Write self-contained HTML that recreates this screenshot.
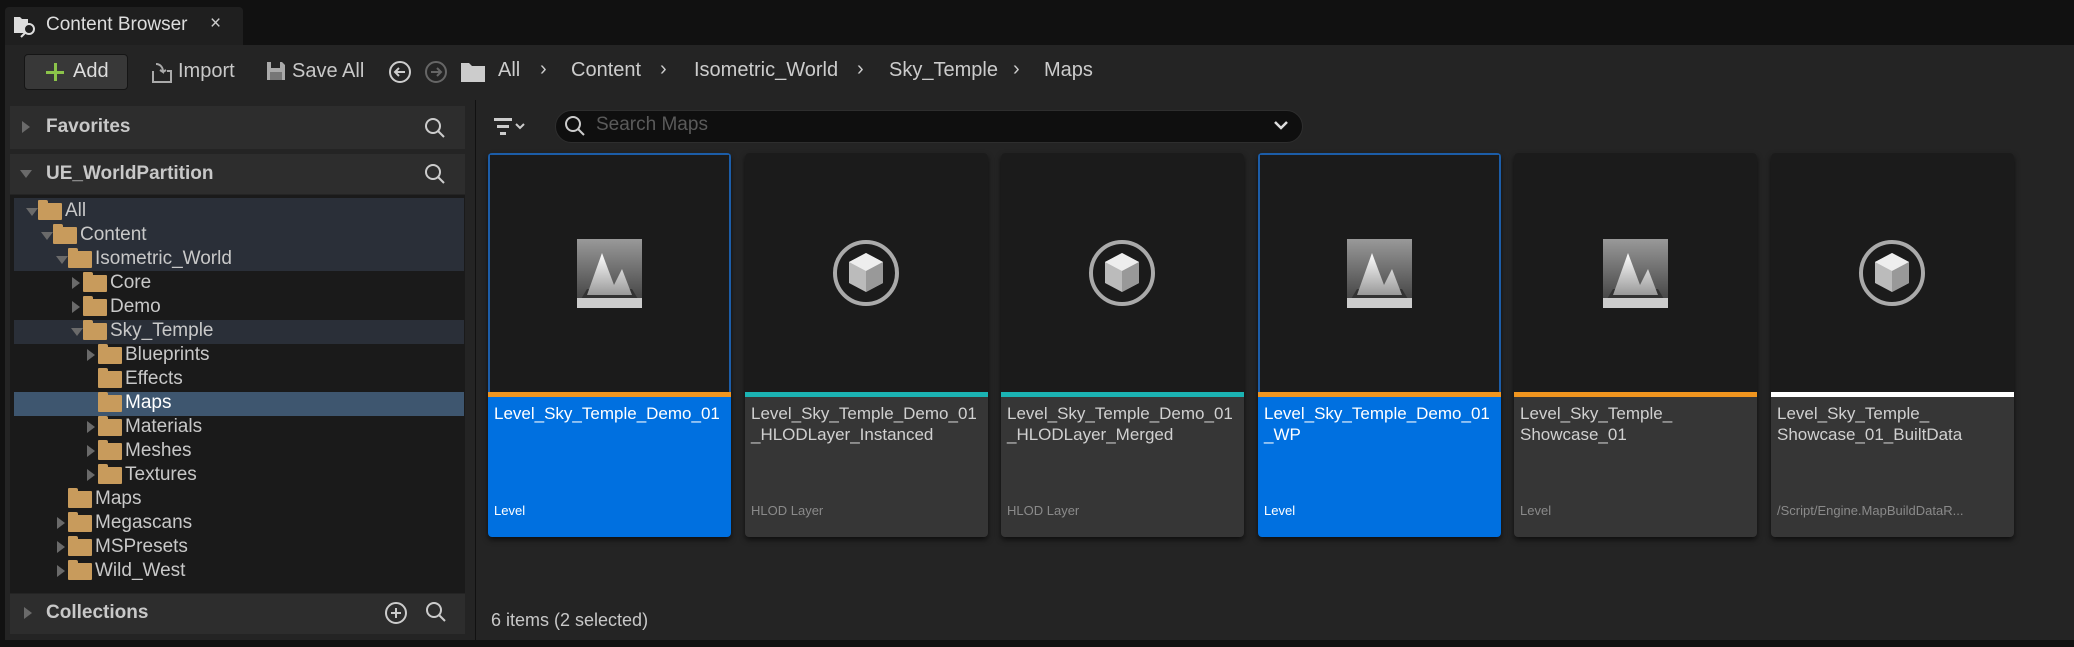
<!DOCTYPE html>
<html><head><meta charset="utf-8"><style>
*{margin:0;padding:0;box-sizing:border-box}
body{width:2074px;height:647px;background:#111;font-family:"Liberation Sans",sans-serif;color:#c0c0c0;position:relative;overflow:hidden}
.a{position:absolute}
.t{white-space:nowrap}
.row{position:absolute;left:14px;width:448px;height:24px;font-size:19px;color:#c8c8c8;line-height:24px}
.fold{position:absolute;top:4px;width:24px;height:17px;background:#c89b5c;border-radius:1px}
.fold:before{content:"";position:absolute;left:0;top:-3px;width:10px;height:4px;background:#c89b5c;border-radius:1px 2px 0 0}
.arr{position:absolute;top:6px;width:0;height:0}
.ar{border-top:6px solid transparent;border-bottom:6px solid transparent;border-left:8px solid #6a6a6a}
.ad{top:9px;border-left:6px solid transparent;border-right:6px solid transparent;border-top:8px solid #6a6a6a}
.tile{position:absolute;top:153px;width:243px;height:384px;border-radius:4px;overflow:hidden;background:#363636;box-shadow:0 3px 6px rgba(0,0,0,.6)}
.thumb{position:absolute;left:0;top:0;width:100%;height:239px;background:#1b1b1b}
.bar{position:absolute;left:0;top:239px;width:100%;height:5px}
.nm{position:absolute;left:6px;top:250px;font-size:17px;line-height:21px;color:#d0d0d0;white-space:nowrap}
.ty{position:absolute;left:6px;top:350px;font-size:13px;color:#8a8a8a;white-space:nowrap}
.sel{background:#0070e0}
.sel .nm,.sel .ty{color:#fff}
.sel .thumb{border:2px solid #1c5da8;border-bottom:none}
</style></head><body>
<!-- tab -->
<div class="a" style="left:5px;top:7px;width:238px;height:38px;background:#1f1f1f;border-radius:4px 4px 0 0"></div>
<svg class="a" style="left:12px;top:14px" width="26" height="24" viewBox="0 0 26 24"><path d="M2 3h6l2 2h6v14H2z" fill="#ddd"/><circle cx="17" cy="15" r="5" fill="#1f1f1f" stroke="#ddd" stroke-width="2"/><path d="M13 19l-4 4" stroke="#ddd" stroke-width="2"/></svg>
<div class="a t" style="left:46px;top:14px;font-size:19px;color:#ddd">Content Browser</div>
<div class="a t" style="left:210px;top:13px;font-size:19px;color:#ccc">×</div>
<!-- toolbar -->
<div class="a" style="left:5px;top:45px;width:2069px;height:55px;background:#242424"></div>
<div class="a" style="left:24px;top:54px;width:104px;height:36px;background:#383838;border:1px solid #151515;border-radius:4px"></div>
<div class="a" style="left:46px;top:71px;width:18px;height:3px;background:#8bc34a"></div>
<div class="a" style="left:54px;top:63px;width:3px;height:18px;background:#8bc34a"></div>
<div class="a t" style="left:73px;top:60px;font-size:20px;color:#ddd">Add</div>
<svg class="a" style="left:150px;top:60px" width="24" height="24" viewBox="0 0 24 24" fill="none" stroke="#aaa" stroke-width="2"><path d="M3 11v11h18V11h-4"/><path d="M6 4c4 0 7 3 7 8l-3-2m3 2l3-2"/></svg>
<div class="a t" style="left:178px;top:60px;font-size:20px;color:#c8c8c8">Import</div>
<svg class="a" style="left:265px;top:60px" width="22" height="22" viewBox="0 0 22 22"><path d="M2 2h15l3 3v15H2z" fill="#aaa"/><rect x="6" y="2" width="9" height="6" fill="#242424"/><rect x="5" y="12" width="12" height="8" fill="#777"/></svg>
<div class="a t" style="left:292px;top:60px;font-size:20px;color:#c8c8c8">Save All</div>
<svg class="a" style="left:388px;top:60px" width="24" height="24" viewBox="0 0 24 24" fill="none" stroke="#ccc" stroke-width="2"><circle cx="12" cy="12" r="10"/><path d="M17 12H7m4-4l-4 4 4 4"/></svg>
<svg class="a" style="left:424px;top:60px" width="24" height="24" viewBox="0 0 24 24" fill="none" stroke="#666" stroke-width="2"><circle cx="12" cy="12" r="10"/><path d="M7 12h10m-4-4l4 4-4 4"/></svg>
<svg class="a" style="left:460px;top:61px" width="26" height="22" viewBox="0 0 26 22"><path d="M1 2h8l3 3h13v16H1z" fill="#ccc"/></svg>
<div class="a t" style="left:498px;top:59px;font-size:20px;color:#ccc">All</div>
<div class="a t" style="left:540px;top:58px;font-size:20px;color:#ccc">›</div>
<div class="a t" style="left:571px;top:59px;font-size:20px;color:#ccc">Content</div>
<div class="a t" style="left:660px;top:58px;font-size:20px;color:#ccc">›</div>
<div class="a t" style="left:694px;top:59px;font-size:20px;color:#ccc">Isometric_World</div>
<div class="a t" style="left:857px;top:58px;font-size:20px;color:#ccc">›</div>
<div class="a t" style="left:889px;top:59px;font-size:20px;color:#ccc">Sky_Temple</div>
<div class="a t" style="left:1013px;top:58px;font-size:20px;color:#ccc">›</div>
<div class="a t" style="left:1044px;top:59px;font-size:20px;color:#ccc">Maps</div>
<!-- left panel -->
<div class="a" style="left:5px;top:100px;width:470px;height:540px;background:#242424"></div>
<div class="a" style="left:10px;top:106px;width:455px;height:43px;background:#2d2d2d"></div>
<div class="a ar arr" style="left:22px;top:121px"></div>
<div class="a t" style="left:46px;top:116px;font-size:19px;font-weight:bold;color:#c8c8c8">Favorites</div>
<div class="a" style="left:10px;top:154px;width:455px;height:40px;background:#2d2d2d"></div>
<div class="a ad arr" style="left:20px;top:170px"></div>
<div class="a t" style="left:46px;top:163px;font-size:19px;font-weight:bold;color:#c8c8c8">UE_WorldPartition</div>
<svg class="a" style="left:423px;top:116px" width="24" height="24" viewBox="0 0 24 24" fill="none" stroke="#ccc" stroke-width="2"><circle cx="10" cy="10" r="7"/><path d="M15 15l6 6"/></svg>
<svg class="a" style="left:423px;top:162px" width="24" height="24" viewBox="0 0 24 24" fill="none" stroke="#ccc" stroke-width="2"><circle cx="10" cy="10" r="7"/><path d="M15 15l6 6"/></svg>
<div class="a" style="left:10px;top:195px;width:455px;height:398px;background:#1a1a1a"></div>
<div class="a" style="left:14px;top:198px;width:450px;height:73px;background:#2a2f38"></div>
<div class="a" style="left:14px;top:320px;width:450px;height:24px;background:#2a2f38"></div>
<div class="a" style="left:14px;top:392px;width:450px;height:24px;background:#3e566f"></div>
<div class="row" style="top:199px"><div class="arr ad" style="left:12px"></div><div class="fold" style="left:24px"></div><span class="a" style="left:51px">All</span></div>
<div class="row" style="top:223px"><div class="arr ad" style="left:27px"></div><div class="fold" style="left:39px"></div><span class="a" style="left:66px">Content</span></div>
<div class="row" style="top:247px"><div class="arr ad" style="left:42px"></div><div class="fold" style="left:54px"></div><span class="a" style="left:81px">Isometric_World</span></div>
<div class="row" style="top:271px"><div class="arr ar" style="left:58px"></div><div class="fold" style="left:69px"></div><span class="a" style="left:96px">Core</span></div>
<div class="row" style="top:295px"><div class="arr ar" style="left:58px"></div><div class="fold" style="left:69px"></div><span class="a" style="left:96px">Demo</span></div>
<div class="row" style="top:319px"><div class="arr ad" style="left:57px"></div><div class="fold" style="left:69px"></div><span class="a" style="left:96px">Sky_Temple</span></div>
<div class="row" style="top:343px"><div class="arr ar" style="left:73px"></div><div class="fold" style="left:84px"></div><span class="a" style="left:111px">Blueprints</span></div>
<div class="row" style="top:367px"><div class="fold" style="left:84px"></div><span class="a" style="left:111px">Effects</span></div>
<div class="row" style="top:391px;color:#fff"><div class="fold" style="left:84px"></div><span class="a" style="left:111px">Maps</span></div>
<div class="row" style="top:415px"><div class="arr ar" style="left:73px"></div><div class="fold" style="left:84px"></div><span class="a" style="left:111px">Materials</span></div>
<div class="row" style="top:439px"><div class="arr ar" style="left:73px"></div><div class="fold" style="left:84px"></div><span class="a" style="left:111px">Meshes</span></div>
<div class="row" style="top:463px"><div class="arr ar" style="left:73px"></div><div class="fold" style="left:84px"></div><span class="a" style="left:111px">Textures</span></div>
<div class="row" style="top:487px"><div class="fold" style="left:54px"></div><span class="a" style="left:81px">Maps</span></div>
<div class="row" style="top:511px"><div class="arr ar" style="left:43px"></div><div class="fold" style="left:54px"></div><span class="a" style="left:81px">Megascans</span></div>
<div class="row" style="top:535px"><div class="arr ar" style="left:43px"></div><div class="fold" style="left:54px"></div><span class="a" style="left:81px">MSPresets</span></div>
<div class="row" style="top:559px"><div class="arr ar" style="left:43px"></div><div class="fold" style="left:54px"></div><span class="a" style="left:81px">Wild_West</span></div>
<div class="a" style="left:10px;top:594px;width:455px;height:40px;background:#2d2d2d"></div>
<div class="a ar arr" style="left:24px;top:607px"></div>
<div class="a t" style="left:46px;top:602px;font-size:19px;font-weight:bold;color:#c8c8c8">Collections</div>
<svg class="a" style="left:384px;top:601px" width="24" height="24" viewBox="0 0 24 24" fill="none" stroke="#ccc" stroke-width="2"><circle cx="12" cy="12" r="10"/><path d="M12 7v10M7 12h10"/></svg>
<svg class="a" style="left:424px;top:600px" width="24" height="24" viewBox="0 0 24 24" fill="none" stroke="#ccc" stroke-width="2"><circle cx="10" cy="10" r="7"/><path d="M15 15l6 6"/></svg>
<!-- right panel -->
<div class="a" style="left:476px;top:100px;width:1598px;height:540px;background:#242424"></div>
<svg class="a" style="left:492px;top:116px" width="36" height="22" viewBox="0 0 36 22" fill="#ccc"><rect x="2" y="2" width="18" height="3"/><rect x="5" y="9" width="12" height="3"/><rect x="8" y="16" width="6" height="3"/><path d="M24 8l4 4 4-4" fill="none" stroke="#ccc" stroke-width="2"/></svg>
<div class="a" style="left:555px;top:110px;width:748px;height:33px;background:#0f0f0f;border-radius:17px;border:1px solid #2e2e2e"></div>
<svg class="a" style="left:562px;top:113px" width="26" height="26" viewBox="0 0 26 26" fill="none" stroke="#ccc" stroke-width="2"><circle cx="11" cy="11" r="7"/><path d="M16 16l6 6"/></svg>
<div class="a t" style="left:596px;top:114px;font-size:19px;color:#5a5a5a">Search Maps</div>
<svg class="a" style="left:1272px;top:118px" width="18" height="14" viewBox="0 0 18 14" fill="none" stroke="#ddd" stroke-width="2.5"><path d="M3 4l6 6 6-6"/></svg>

<svg width="0" height="0" style="position:absolute"><defs>
<linearGradient id="lg" x1="0" y1="0" x2="0" y2="1"><stop offset="0" stop-color="#999"/><stop offset="1" stop-color="#3a3a3a"/></linearGradient>
<linearGradient id="mg" x1="0" y1="0" x2="0" y2="1"><stop offset="0" stop-color="#fff"/><stop offset="1" stop-color="#999"/></linearGradient>
</defs></svg>

<!-- tiles -->
<div class="tile sel" style="left:488px"><div class="thumb"></div><div class="bar" style="background:#f0951f"></div><div class="nm">Level_Sky_Temple_Demo_01</div><div class="ty">Level</div>
<svg class="a" style="left:89px;top:86px" width="65" height="69" viewBox="0 0 65 69"><rect width="65" height="69" fill="url(#lg)"/><path d="M4 60l6-10h45l6 10z" fill="#333"/><rect y="59" width="65" height="10" fill="#ccc"/><path d="M10 56L25 14 37 46 45 30 55 56z" fill="url(#mg)"/></svg></div>
<div class="tile" style="left:745px"><div class="thumb"></div><div class="bar" style="background:#1bb3b3"></div><div class="nm">Level_Sky_Temple_Demo_01<br>_HLODLayer_Instanced</div><div class="ty">HLOD Layer</div>
<svg class="a" style="left:87px;top:86px" width="68" height="68" viewBox="0 0 68 68"><circle cx="34" cy="34" r="31" fill="none" stroke="#aaa" stroke-width="4"/><path d="M34 14l17 9v21l-17 9-17-9V23z" fill="#bbb"/><path d="M34 14l17 9-17 9-17-9z" fill="#eee"/><path d="M34 32v21l17-9V23z" fill="#999"/></svg></div>
<div class="tile" style="left:1001px"><div class="thumb"></div><div class="bar" style="background:#1bb3b3"></div><div class="nm">Level_Sky_Temple_Demo_01<br>_HLODLayer_Merged</div><div class="ty">HLOD Layer</div>
<svg class="a" style="left:87px;top:86px" width="68" height="68" viewBox="0 0 68 68"><circle cx="34" cy="34" r="31" fill="none" stroke="#aaa" stroke-width="4"/><path d="M34 14l17 9v21l-17 9-17-9V23z" fill="#bbb"/><path d="M34 14l17 9-17 9-17-9z" fill="#eee"/><path d="M34 32v21l17-9V23z" fill="#999"/></svg></div>
<div class="tile sel" style="left:1258px"><div class="thumb"></div><div class="bar" style="background:#f0951f"></div><div class="nm">Level_Sky_Temple_Demo_01<br>_WP</div><div class="ty">Level</div>
<svg class="a" style="left:89px;top:86px" width="65" height="69" viewBox="0 0 65 69"><rect width="65" height="69" fill="url(#lg)"/><path d="M4 60l6-10h45l6 10z" fill="#333"/><rect y="59" width="65" height="10" fill="#ccc"/><path d="M10 56L25 14 37 46 45 30 55 56z" fill="url(#mg)"/></svg></div>
<div class="tile" style="left:1514px"><div class="thumb"></div><div class="bar" style="background:#f0951f"></div><div class="nm">Level_Sky_Temple_<br>Showcase_01</div><div class="ty">Level</div>
<svg class="a" style="left:89px;top:86px" width="65" height="69" viewBox="0 0 65 69"><rect width="65" height="69" fill="url(#lg)"/><path d="M4 60l6-10h45l6 10z" fill="#333"/><rect y="59" width="65" height="10" fill="#ccc"/><path d="M10 56L25 14 37 46 45 30 55 56z" fill="url(#mg)"/></svg></div>
<div class="tile" style="left:1771px"><div class="thumb"></div><div class="bar" style="background:#fff"></div><div class="nm">Level_Sky_Temple_<br>Showcase_01_BuiltData</div><div class="ty">/Script/Engine.MapBuildDataR...</div>
<svg class="a" style="left:87px;top:86px" width="68" height="68" viewBox="0 0 68 68"><circle cx="34" cy="34" r="31" fill="none" stroke="#aaa" stroke-width="4"/><path d="M34 14l17 9v21l-17 9-17-9V23z" fill="#bbb"/><path d="M34 14l17 9-17 9-17-9z" fill="#eee"/><path d="M34 32v21l17-9V23z" fill="#999"/></svg></div>

<div class="a t" style="left:491px;top:610px;font-size:18px;color:#c8c8c8">6 items (2 selected)</div>
</body></html>
